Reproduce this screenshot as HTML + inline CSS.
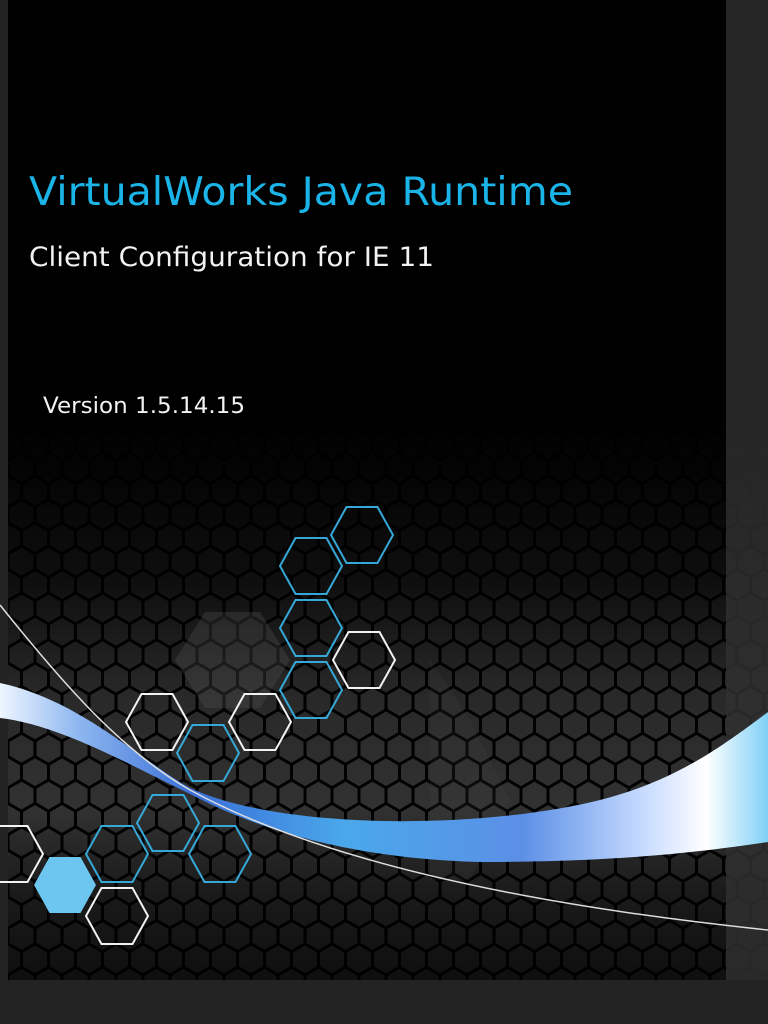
<!DOCTYPE html>
<html><head><meta charset="utf-8"><style>
html,body{margin:0;padding:0;background:#232323;width:768px;height:1024px;overflow:hidden}
svg{display:block}
</style></head><body>
<svg width="768" height="1024" viewBox="0 0 768 1024" xmlns="http://www.w3.org/2000/svg">
<defs>
<pattern id="hx" x="8" y="0" width="27" height="46.8" patternUnits="userSpaceOnUse">
<g fill="#3a3a3a">
<polygon points="13.5,-14 25.5,-7 25.5,7 13.5,14 1.5,7 1.5,-7"/>
<polygon points="13.5,32.8 25.5,39.8 25.5,53.8 13.5,60.8 1.5,53.8 1.5,39.8"/>
<polygon points="0,9.4 12,16.4 12,30.4 0,37.4 -12,30.4 -12,16.4"/>
<polygon points="27,9.4 39,16.4 39,30.4 27,37.4 15,30.4 15,16.4"/>
</g>
</pattern>
<linearGradient id="vfade" x1="0" y1="0" x2="0" y2="1">
<stop offset="0" stop-color="#fff" stop-opacity="0"/>
<stop offset="0.1" stop-color="#fff" stop-opacity="0.06"/>
<stop offset="0.3" stop-color="#fff" stop-opacity="0.25"/>
<stop offset="0.5" stop-color="#fff" stop-opacity="0.7"/>
<stop offset="0.7" stop-color="#fff" stop-opacity="0.85"/>
<stop offset="0.85" stop-color="#fff" stop-opacity="0.45"/>
<stop offset="1" stop-color="#fff" stop-opacity="0.25"/>
</linearGradient>
<mask id="m1"><rect x="0" y="410" width="768" height="570" fill="url(#vfade)"/></mask>
<linearGradient id="sw" x1="0" y1="0" x2="1" y2="0">
<stop offset="0" stop-color="#eef6ff"/>
<stop offset="0.1" stop-color="#8fb8f0"/>
<stop offset="0.25" stop-color="#3a6fd8"/>
<stop offset="0.45" stop-color="#4aa8ea"/>
<stop offset="0.68" stop-color="#5b8fe6"/>
<stop offset="0.84" stop-color="#c8dcff"/>
<stop offset="0.92" stop-color="#ffffff"/>
<stop offset="1" stop-color="#7fd0f6"/>
</linearGradient>
</defs>
<rect width="768" height="1024" fill="#232323"/>
<rect x="726" y="0" width="42" height="980" fill="#262626"/>
<rect x="8" y="0" width="718" height="980" fill="#000"/>
<rect x="8" y="410" width="760" height="570" fill="url(#hx)" mask="url(#m1)"/>
<rect x="726" y="600" width="42" height="380" fill="#2a2a2a" opacity="0.5"/>
<polygon points="175,660 205,612 260,612 290,660 260,708 205,708" fill="#555" opacity="0.3"/>
<polygon points="430,660 470,720 510,800 470,880 430,880" fill="#555" opacity="0.12"/>
<path d="M0,683 C80,700 140,760 190,788 C280,830 480,830 600,800 C680,780 730,740 768,712 L768,842 C700,852 620,862 480,862 C330,858 240,820 190,794 C130,765 60,725 0,718 Z" fill="url(#sw)"/>
<path d="M0,605 C60,680 120,750 190,790 C300,850 480,900 768,930" fill="none" stroke="#ddd" stroke-width="1.5"/>
<g fill="none" stroke-width="2">
<g stroke="#36a8d8">
<polygon transform="translate(362,535)" points="-31,0 -15.5,-28 15.5,-28 31,0 15.5,28 -15.5,28"/>
<polygon transform="translate(311,566)" points="-31,0 -15.5,-28 15.5,-28 31,0 15.5,28 -15.5,28"/>
<polygon transform="translate(311,628)" points="-31,0 -15.5,-28 15.5,-28 31,0 15.5,28 -15.5,28"/>
<polygon transform="translate(311,690)" points="-31,0 -15.5,-28 15.5,-28 31,0 15.5,28 -15.5,28"/>
<polygon transform="translate(208,753)" points="-31,0 -15.5,-28 15.5,-28 31,0 15.5,28 -15.5,28"/>
<polygon transform="translate(168,823)" points="-31,0 -15.5,-28 15.5,-28 31,0 15.5,28 -15.5,28"/>
<polygon transform="translate(117,854)" points="-31,0 -15.5,-28 15.5,-28 31,0 15.5,28 -15.5,28"/>
<polygon transform="translate(220,854)" points="-31,0 -15.5,-28 15.5,-28 31,0 15.5,28 -15.5,28"/>
</g>
<g stroke="#f2f2f2">
<polygon transform="translate(364,660)" points="-31,0 -15.5,-28 15.5,-28 31,0 15.5,28 -15.5,28"/>
<polygon transform="translate(157,722)" points="-31,0 -15.5,-28 15.5,-28 31,0 15.5,28 -15.5,28"/>
<polygon transform="translate(260,722)" points="-31,0 -15.5,-28 15.5,-28 31,0 15.5,28 -15.5,28"/>
<polygon transform="translate(12,854)" points="-31,0 -15.5,-28 15.5,-28 31,0 15.5,28 -15.5,28"/>
<polygon transform="translate(117,916)" points="-31,0 -15.5,-28 15.5,-28 31,0 15.5,28 -15.5,28"/>
</g>
</g>
<polygon transform="translate(65,885)" points="-31,0 -15.5,-28 15.5,-28 31,0 15.5,28 -15.5,28" fill="#6cc6f0"/>
<text x="29" y="205" font-family="DejaVu Sans, Liberation Sans, sans-serif" font-size="39" fill="#1ab4e8" textLength="544" lengthAdjust="spacingAndGlyphs">VirtualWorks Java Runtime</text>
<text x="29" y="266" font-family="DejaVu Sans, Liberation Sans, sans-serif" font-size="27" fill="#f2f2f2" textLength="405" lengthAdjust="spacingAndGlyphs">Client Configuration for IE 11</text>
<text x="43" y="413" font-family="DejaVu Sans, Liberation Sans, sans-serif" font-size="22" fill="#f2f2f2" textLength="202" lengthAdjust="spacingAndGlyphs">Version 1.5.14.15</text>
</svg>
</body></html>
